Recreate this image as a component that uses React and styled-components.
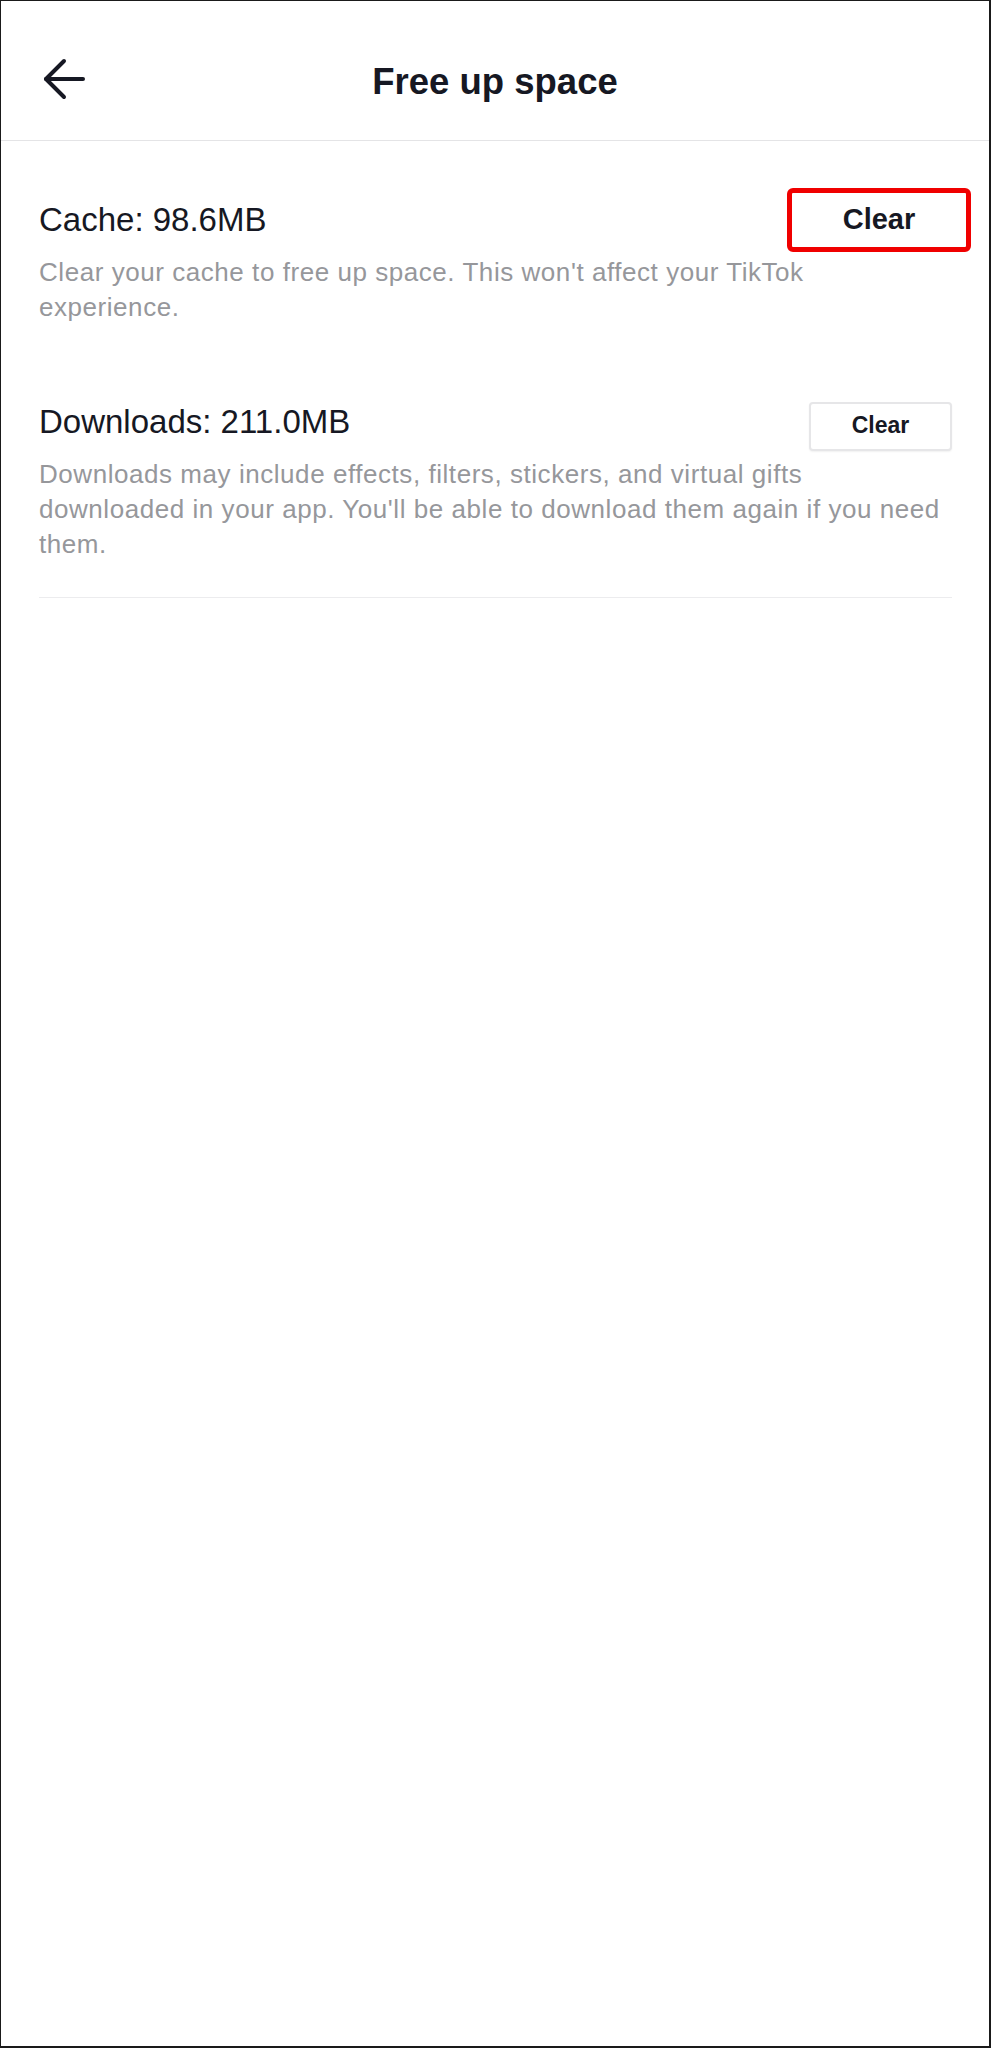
import React from 'react';
import styled, { createGlobalStyle } from 'styled-components';

const GlobalStyle = createGlobalStyle`
    * {
        box-sizing: border-box;
    }
    body {
        margin: 0;
        background: #ffffff;
        font-family: 'Liberation Sans', Arial, sans-serif;
    }
`;

const Screen = styled.div`
    width: 991px;
    height: 2048px;
    background: #ffffff;
    border: 1px solid #1a1a1a;
    border-right-width: 2px;
    border-bottom-width: 2px;
    display: flex;
    flex-direction: column;
`;

const Header = styled.header`
    height: 140px;
    padding-top: 23px;
    display: grid;
    grid-template-columns: 1fr auto 1fr;
    align-items: center;
    border-bottom: 1px solid #e4e4e6;
`;

const BackButton = styled.button`
    justify-self: start;
    margin-left: 40px;
    margin-top: -4px;
    width: 46px;
    height: 46px;
    padding: 0;
    border: none;
    background: none;
    color: #161823;
    display: flex;
    align-items: center;
    justify-content: center;
`;

const Title = styled.h1`
    margin: 0;
    font-size: 36.5px;
    font-weight: 700;
    color: #161823;
    line-height: 44px;
`;

const Content = styled.main`
    padding: 0 37px 0 38px;
`;

const List = styled.div`
    padding: 59px 0 35px;
    border-bottom: 1px solid #ececee;
    display: flex;
    flex-direction: column;
    gap: 77px;
`;

const Item = styled.section`
    display: flex;
    flex-direction: column;
`;

const ItemRow = styled.div`
    height: 40px;
    display: flex;
    justify-content: space-between;
    align-items: flex-start;
`;

const ItemTitle = styled.h2`
    margin: 0;
    font-size: 33px;
    font-weight: 400;
    line-height: 40px;
    color: #161823;
`;

const ClearButton = styled.button`
    flex-shrink: 0;
    width: ${p => (p.$highlighted ? '184px' : '143px')};
    height: ${p => (p.$highlighted ? '64px' : '49px')};
    margin-top: ${p => (p.$highlighted ? '-12px' : '0')};
    margin-right: ${p => (p.$highlighted ? '-19px' : '0')};
    border: ${p => (p.$highlighted ? '5px solid #f00000' : '2px solid #e6e6e8')};
    border-radius: ${p => (p.$highlighted ? '6px' : '4px')};
    background: #ffffff;
    box-shadow: ${p => (p.$highlighted ? 'none' : '0 1px 2px rgba(0, 0, 0, 0.06)')};
    font-family: 'Liberation Sans', Arial, sans-serif;
    font-size: ${p => (p.$highlighted ? '29px' : '23px')};
    font-weight: 700;
    color: #161823;
    padding: 0 0 2px;
`;

const Description = styled.p`
    margin: 15px 0 0;
    font-size: 26px;
    letter-spacing: 0.55px;
    line-height: 35px;
    color: #96979b;
`;

const DescLine = styled.span`
    display: block;
    white-space: nowrap;
`;

const ArrowIcon = () => (
    <svg width="44" height="44" viewBox="0 0 44 44" fill="none" stroke="currentColor" strokeWidth="4" strokeLinecap="round" strokeLinejoin="round">
        <path d="M41 21H4" />
        <path d="M22 3L4 21L22 39" />
    </svg>
);

// lines are split where the app wraps them
const items = [
    {
        id: 'cache',
        title: 'Cache: 98.6MB',
        lines: ["Clear your cache to free up space. This won't affect your TikTok", 'experience.'],
        highlighted: true,
    },
    {
        id: 'downloads',
        title: 'Downloads: 211.0MB',
        lines: [
            'Downloads may include effects, filters, stickers, and virtual gifts',
            "downloaded in your app. You'll be able to download them again if you need",
            'them.',
        ],
        highlighted: false,
    },
];

const App = () => {
    return (
        <>
            <GlobalStyle />
            <Screen>
                <Header>
                    <BackButton aria-label="Back">
                        <ArrowIcon />
                    </BackButton>
                    <Title>Free up space</Title>
                    <span />
                </Header>

                <Content>
                    <List>
                        {items.map(item => (
                            <Item key={item.id}>
                                <ItemRow>
                                    <ItemTitle>{item.title}</ItemTitle>
                                    <ClearButton $highlighted={item.highlighted}>Clear</ClearButton>
                                </ItemRow>
                                <Description>
                                    {item.lines.map(line => (
                                        <DescLine key={line}>{line}</DescLine>
                                    ))}
                                </Description>
                            </Item>
                        ))}
                    </List>
                </Content>
            </Screen>
        </>
    );
};

export default App;
